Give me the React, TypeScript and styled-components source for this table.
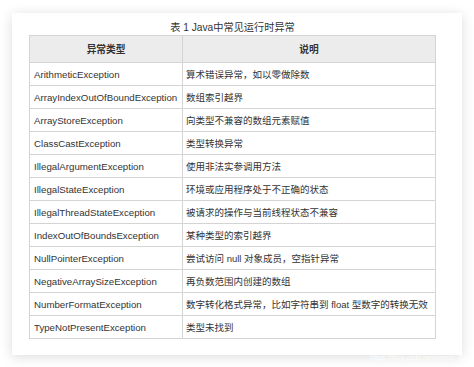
import React from "react";
import styled, { createGlobalStyle } from "styled-components";

const GlobalStyle = createGlobalStyle`
  html, body {
    margin: 0;
    padding: 0;
    background: #ffffff;
  }
`;

// Whole page, white background around the card
const Page = styled.div`
  position: relative;
  width: 474px;
  height: 367px;
  padding: 13px 12px 0 12px;
  box-sizing: border-box;
  font-family: "Liberation Sans", Arial, "Noto Sans CJK SC", sans-serif;
  color: #333;
  overflow: hidden;
`;

// Card holding caption and table
const Card = styled.div`
  width: 450px;
  height: 342px;
  box-sizing: border-box;
  padding: 8px 26px 0 17px;
  background: #fff;
  box-shadow: 0 2px 12px rgba(0, 0, 0, 0.14);
`;

const Caption = styled.div`
  text-align: center;
  font-size: 10.2px;
  line-height: 14px;
  color: #333;
`;

const Table = styled.table`
  width: 407px;
  border-collapse: collapse;
  table-layout: fixed;
  font-size: 9.7px;
`;

const HeadCell = styled.th<{ $width?: number }>`
  width: ${(p) => (p.$width ? `${p.$width}px` : "auto")};
  height: 26px;
  padding: 0;
  background: #ececec;
  border: 1px solid #d4d4d4;
  font-weight: bold;
  text-align: center;
  color: #333;
`;

const Cell = styled.td<{ $desc?: boolean }>`
  height: 22px;
  padding: 0 ${(p) => (p.$desc ? "2px 0 3px" : "4px")};
  font-size: ${(p) => (p.$desc ? "9.5px" : "9.7px")};
  border: 1px solid #d4d4d4;
  white-space: nowrap;
  overflow: hidden;
  color: #333;
`;

// Faint blog watermark sitting over the shadow
const Watermark = styled.div`
  position: absolute;
  right: 8px;
  bottom: 6px;
  font-size: 7px;
  color: rgba(255, 255, 255, 0.9);
`;

const rows: [string, string][] = [
  ["ArithmeticException", "算术错误异常，如以零做除数"],
  ["ArrayIndexOutOfBoundException", "数组索引越界"],
  ["ArrayStoreException", "向类型不兼容的数组元素赋值"],
  ["ClassCastException", "类型转换异常"],
  ["IllegalArgumentException", "使用非法实参调用方法"],
  ["IllegalStateException", "环境或应用程序处于不正确的状态"],
  ["IllegalThreadStateException", "被请求的操作与当前线程状态不兼容"],
  ["IndexOutOfBoundsException", "某种类型的索引越界"],
  ["NullPointerException", "尝试访问 null 对象成员，空指针异常"],
  ["NegativeArraySizeException", "再负数范围内创建的数组"],
  ["NumberFormatException", "数字转化格式异常，比如字符串到 float 型数字的转换无效"],
  ["TypeNotPresentException", "类型未找到"],
];

const App = () => (
  <Page>
    <GlobalStyle />
    <Card>
      <Caption>表 1 Java中常见运行时异常</Caption>
      <Table>
        <thead>
          <tr>
            <HeadCell $width={152}>异常类型</HeadCell>
            <HeadCell>说明</HeadCell>
          </tr>
        </thead>
        <tbody>
          {rows.map(([name, desc]) => (
            <tr key={name}>
              <Cell>{name}</Cell>
              <Cell $desc>{desc}</Cell>
            </tr>
          ))}
        </tbody>
      </Table>
    </Card>
    <Watermark>https://blog.csdn.net/weixin_43</Watermark>
  </Page>
);

export default App;
